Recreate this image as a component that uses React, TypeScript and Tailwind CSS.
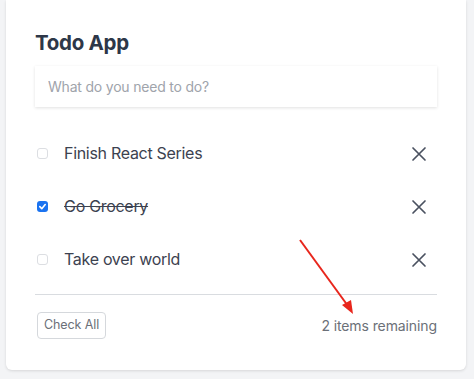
import { useState } from "react";

interface Todo {
  id: number;
  title: string;
  done: boolean;
}

const initialTodos: Todo[] = [
  { id: 1, title: "Finish React Series", done: false },
  { id: 2, title: "Go Grocery", done: true },
  { id: 3, title: "Take over world", done: false },
];

const CloseIcon = () => (
  <svg width="16" height="16" viewBox="0 0 16 16" fill="none" stroke="#4a5160" strokeWidth="1.7" strokeLinecap="round">
    <path d="M2 2 L14 14 M14 2 L2 14" />
  </svg>
);

// simple custom checkbox so it looks like the mac one in the shot
const Checkbox = ({ checked, onToggle }: { checked: boolean; onToggle: () => void }) => (
  <button
    onClick={onToggle}
    className={`ml-[2px] w-[11px] h-[11px] rounded-[3px] flex items-center justify-center ${
      checked ? "bg-[#1b73f0]" : "bg-white border border-[#dcdee2]"
    }`}
  >
    {checked && (
      <svg width="9" height="9" viewBox="0 0 10 10" fill="none" stroke="white" strokeWidth="1.8" strokeLinecap="round" strokeLinejoin="round">
        <path d="M2 5.2 L4.2 7.4 L8 2.8" />
      </svg>
    )}
  </button>
);

const App = () => {
  const [todos, setTodos] = useState<Todo[]>(initialTodos);
  const remaining = todos.filter((t) => !t.done).length;

  const toggle = (id: number) =>
    setTodos((list) => list.map((t) => (t.id === id ? { ...t, done: !t.done } : t)));

  return (
    <div
      className="relative w-[474px] h-[379px] bg-[#f3f4f6] pl-[6px] pr-[8px] overflow-hidden"
      style={{ fontFamily: "Inter, 'Noto Sans', sans-serif" }}
    >
      <div className="h-[370px] bg-white rounded-b-md shadow-[0_1px_3px_rgba(0,0,0,0.12)] px-[29px] pt-[29px]">
        <h1 className="text-[20.5px] leading-[28px] font-bold tracking-[-0.3px] text-[#2d3748]">Todo App</h1>

        <input
          className="mt-[9px] w-full h-[41px] px-[13px] text-[14px] tracking-[-0.2px] text-[#2d3748] placeholder-[#a0a4ab] bg-white shadow-[0_1px_3px_rgba(0,0,0,0.12)] outline-none"
          placeholder="What do you need to do?"
        />

        <ul className="mt-[20px]">
          {todos.map((todo) => (
            <li key={todo.id} className="flex items-center h-[53px]">
              <Checkbox checked={todo.done} onToggle={() => toggle(todo.id)} />
              <span
                className={`ml-[16px] pb-[2px] flex-1 text-[16px] tracking-[-0.3px] text-[#3c4250] ${todo.done ? "line-through" : ""}`}
              >
                {todo.title}
              </span>
              <button className="mr-[10px]">
                <CloseIcon />
              </button>
            </li>
          ))}
        </ul>

        <div className="mt-[8px] border-t border-[#d9dce0]" />

        <div className="mt-[17px] flex items-center justify-between">
          <button className="ml-[2px] h-[27px] px-[6px] text-[12.5px] tracking-[-0.1px] text-[#6b7078] border border-[#d5d8dc] rounded">
            Check All
          </button>
          <span className="text-[14px] tracking-[-0.1px] text-[#6b7078]">{remaining} items remaining</span>
        </div>
      </div>

      <svg className="absolute left-0 top-0 pointer-events-none" width="474" height="379">
        <line x1="300" y1="240" x2="348" y2="306" stroke="#e8261c" strokeWidth="2" />
        <polygon points="353,314 342,305 351,300" fill="#e8261c" />
      </svg>
    </div>
  );
};

export default App;
